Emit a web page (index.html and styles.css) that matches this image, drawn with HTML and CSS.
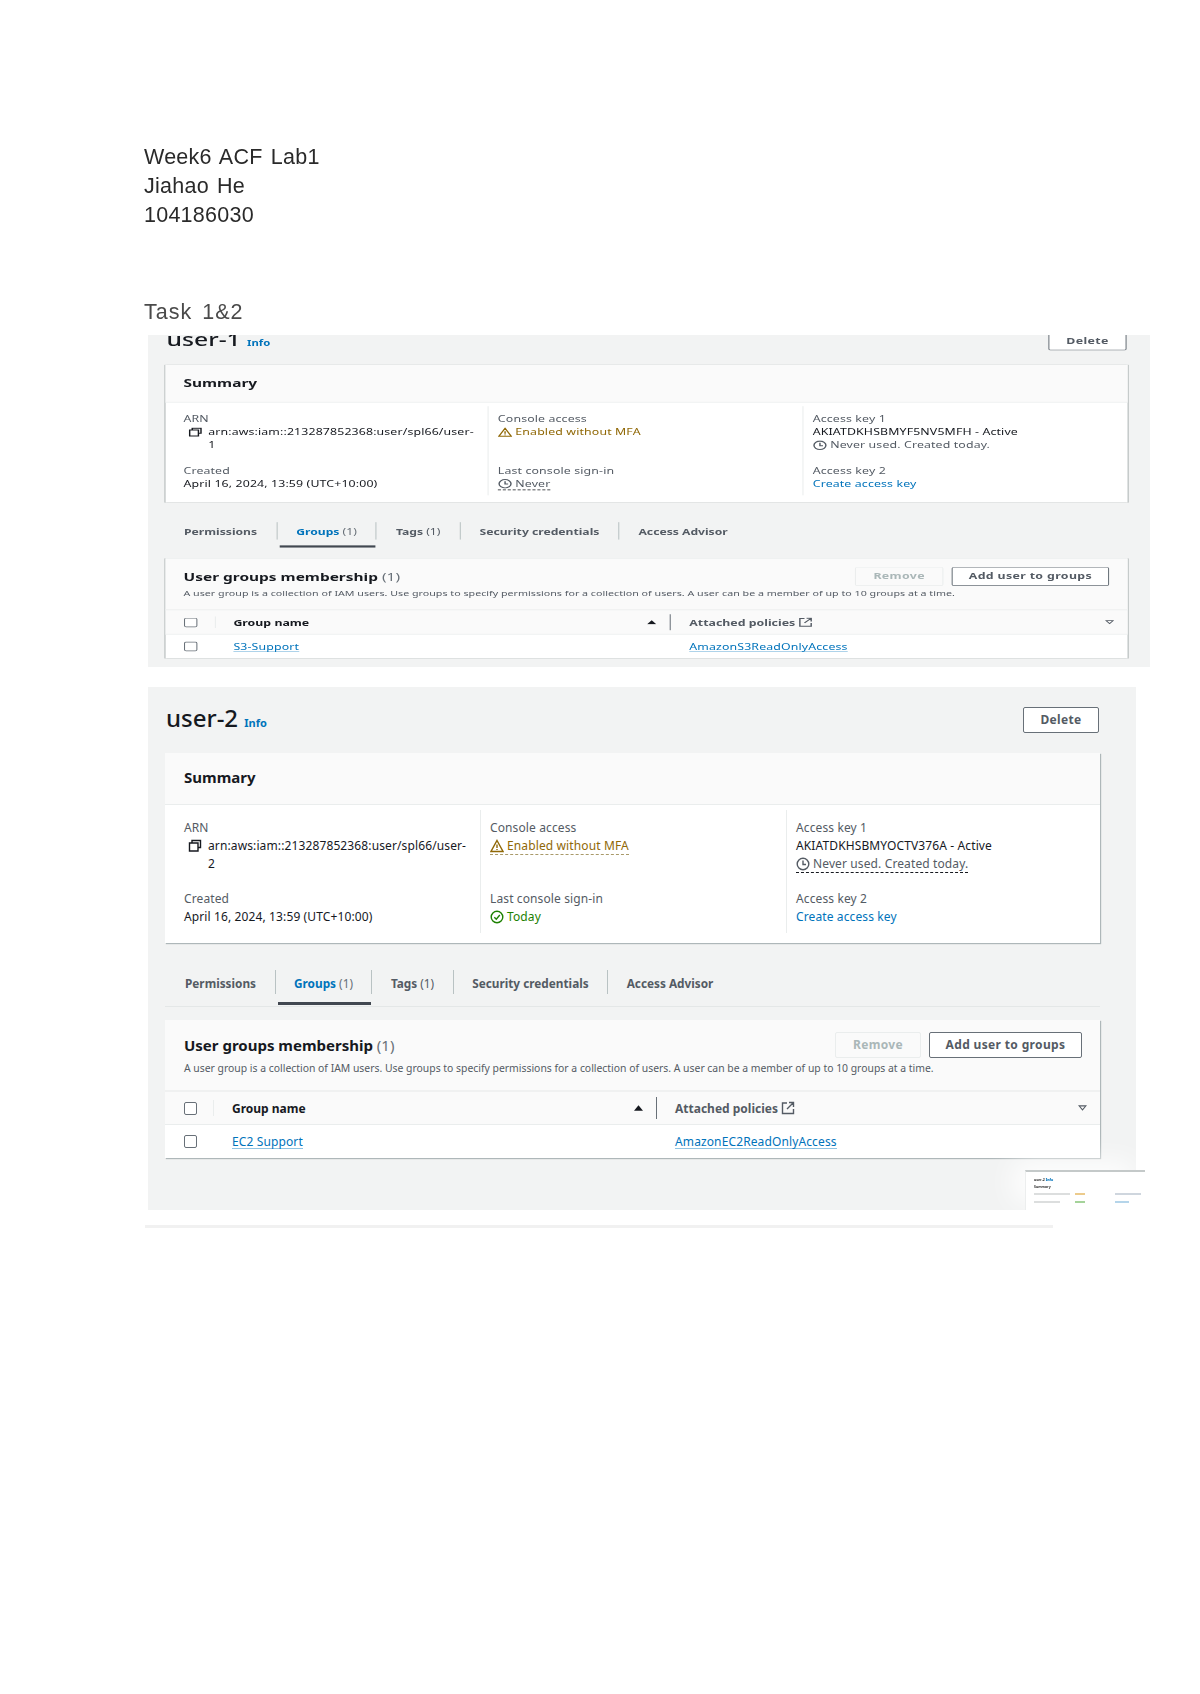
FILE: index.html
```html
<!DOCTYPE html>
<html lang="en">
<head>
<meta charset="utf-8">
<title>Week6 ACF Lab1</title>
<link rel="stylesheet" href="styles.css">
</head>
<body>
<main class="doc">
  <section class="intro">
    <p>Week6 ACF Lab1</p>
    <p>Jiahao He</p>
    <p>104186030</p>
  </section>
  <h2 class="task">Task 1&amp;2</h2>

  <div class="shot shot-clipped">
    <article class="sheet sheet-squashed">
      <header class="sheet-head">
        <h1 class="user-title">user-1 <a class="info">Info</a></h1>
        <button class="btn">Delete</button>
      </header>
      <section class="card">
        <h3 class="card-head">Summary</h3>
        <div class="summary">
          <div class="col">
            <div class="field">
              <div class="label">ARN</div>
              <div class="arn">
                <svg class="ico" viewBox="0 0 14 14"><path d="M4 3.500V1.500h8.500v7H10M1.500 4h8.500v8H1.500z"/></svg>
                <span class="value">arn:aws:iam::213287852368:user/spl66/user-<br>1</span>
              </div>
            </div>
            <div class="field">
              <div class="label">Created</div>
              <div class="value">April 16, 2024, 13:59 (UTC+10:00)</div>
            </div>
          </div>
          <div class="col col-rule">
            <div class="field">
              <div class="label">Console access</div>
              <div class="status warn">
                <svg class="ico" viewBox="0 0 14 14"><path d="M7 1.500 13 12.500H1zM7 5.500v3.500M7 10v1"/></svg>
                <span>Enabled without MFA</span>
              </div>
            </div>
            <div class="field">
              <div class="label">Last console sign-in</div>
              <div class="status muted dashed">
                <svg class="ico" viewBox="0 0 14 14"><circle cx="7" cy="7" r="5.800"/><path d="M7 3.500V7.500H10"/></svg>
                <span>Never</span>
              </div>
            </div>
          </div>
          <div class="col col-rule">
            <div class="field">
              <div class="label">Access key 1</div>
              <div class="value">AKIATDKHSBMYF5NV5MFH - Active</div>
              <div class="status muted">
                <svg class="ico" viewBox="0 0 14 14"><circle cx="7" cy="7" r="5.800"/><path d="M7 3.500V7.500H10"/></svg>
                <span>Never used. Created today.</span>
              </div>
            </div>
            <div class="field">
              <div class="label">Access key 2</div>
              <a class="link">Create access key</a>
            </div>
          </div>
        </div>
      </section>
      <nav class="tabs tabs-plain">
        <span class="tab">Permissions</span>
        <span class="tab tab-active">Groups <i>(1)</i></span>
        <span class="tab">Tags <i>(1)</i></span>
        <span class="tab">Security credentials</span>
        <span class="tab">Access Advisor</span>
      </nav>
      <section class="card">
        <div class="groups-head">
          <div class="groups-top">
            <h3 class="groups-title">User groups membership <i>(1)</i></h3>
            <div class="actions">
              <button class="btn btn-off">Remove</button>
              <button class="btn btn-add">Add user to groups</button>
            </div>
          </div>
          <p class="groups-desc">A user group is a collection of IAM users. Use groups to specify permissions for a collection of users. A user can be a member of up to 10 groups at a time.</p>
        </div>
        <div class="row row-head">
          <div class="cell-check cell-check-rule"><span class="box"></span></div>
          <div class="cell-name">
            <span class="th">Group name</span>
            <svg class="sort" viewBox="0 0 10 6"><path d="M5 0l5 6H0z"/></svg>
            <span class="sep"></span>
          </div>
          <div class="cell-policy">
            <span class="th th-soft">Attached policies</span>
            <svg class="ico ext" viewBox="0 0 14 14"><path d="M6 2H1.500v10.500h11V8M8 1.500h4.500V6M12.500 1.500 6 8"/></svg>
            <svg class="sort sort-down" viewBox="0 0 10 6"><path d="M0 0h10L5 6zM2.500 1.300 5 4.200l2.500-2.900z" fill-rule="evenodd"/></svg>
          </div>
        </div>
        <div class="row">
          <div class="cell-check"><span class="box"></span></div>
          <div class="cell-name"><a class="link link-under">S3-Support</a></div>
          <div class="cell-policy"><a class="link link-under">AmazonS3ReadOnlyAccess</a></div>
        </div>
      </section>
    </article>
  </div>

  <div class="shot">
    <article class="sheet">
      <header class="sheet-head">
        <h1 class="user-title">user-2 <a class="info">Info</a></h1>
        <button class="btn">Delete</button>
      </header>
      <section class="card">
        <h3 class="card-head">Summary</h3>
        <div class="summary">
          <div class="col">
            <div class="field">
              <div class="label">ARN</div>
              <div class="arn">
                <svg class="ico" viewBox="0 0 14 14"><path d="M4 3.500V1.500h8.500v7H10M1.500 4h8.500v8H1.500z"/></svg>
                <span class="value">arn:aws:iam::213287852368:user/spl66/user-<br>2</span>
              </div>
            </div>
            <div class="field">
              <div class="label">Created</div>
              <div class="value">April 16, 2024, 13:59 (UTC+10:00)</div>
            </div>
          </div>
          <div class="col col-rule">
            <div class="field">
              <div class="label">Console access</div>
              <div class="status warn dotted">
                <svg class="ico" viewBox="0 0 14 14"><path d="M7 1.500 13 12.500H1zM7 5.500v3.500M7 10v1"/></svg>
                <span>Enabled without MFA</span>
              </div>
            </div>
            <div class="field">
              <div class="label">Last console sign-in</div>
              <div class="status ok">
                <svg class="ico" viewBox="0 0 14 14"><circle cx="7" cy="7" r="5.800"/><path d="M4.300 7.200 6.300 9.200 9.800 5"/></svg>
                <span>Today</span>
              </div>
            </div>
          </div>
          <div class="col col-rule">
            <div class="field">
              <div class="label">Access key 1</div>
              <div class="value">AKIATDKHSBMYOCTV376A - Active</div>
              <div class="status muted dashed">
                <svg class="ico" viewBox="0 0 14 14"><circle cx="7" cy="7" r="5.800"/><path d="M7 3.500V7.500H10"/></svg>
                <span>Never used. Created today.</span>
              </div>
            </div>
            <div class="field">
              <div class="label">Access key 2</div>
              <a class="link">Create access key</a>
            </div>
          </div>
        </div>
      </section>
      <nav class="tabs">
        <span class="tab">Permissions</span>
        <span class="tab tab-active">Groups <i>(1)</i></span>
        <span class="tab">Tags <i>(1)</i></span>
        <span class="tab">Security credentials</span>
        <span class="tab">Access Advisor</span>
      </nav>
      <section class="card">
        <div class="groups-head">
          <div class="groups-top">
            <h3 class="groups-title">User groups membership <i>(1)</i></h3>
            <div class="actions">
              <button class="btn btn-off">Remove</button>
              <button class="btn btn-add">Add user to groups</button>
            </div>
          </div>
          <p class="groups-desc">A user group is a collection of IAM users. Use groups to specify permissions for a collection of users. A user can be a member of up to 10 groups at a time.</p>
        </div>
        <div class="row row-head">
          <div class="cell-check cell-check-rule"><span class="box"></span></div>
          <div class="cell-name">
            <span class="th">Group name</span>
            <svg class="sort" viewBox="0 0 10 6"><path d="M5 0l5 6H0z"/></svg>
            <span class="sep"></span>
          </div>
          <div class="cell-policy">
            <span class="th th-soft">Attached policies</span>
            <svg class="ico ext" viewBox="0 0 14 14"><path d="M6 2H1.500v10.500h11V8M8 1.500h4.500V6M12.500 1.500 6 8"/></svg>
            <svg class="sort sort-down" viewBox="0 0 10 6"><path d="M0 0h10L5 6zM2.500 1.300 5 4.200l2.500-2.900z" fill-rule="evenodd"/></svg>
          </div>
        </div>
        <div class="row">
          <div class="cell-check"><span class="box"></span></div>
          <div class="cell-name"><a class="link link-under">EC2 Support</a></div>
          <div class="cell-policy"><a class="link link-under">AmazonEC2ReadOnlyAccess</a></div>
        </div>
      </section>
    </article>
    <aside class="thumb">
      <span class="thumb-title">user-2 <b>Info</b></span>
      <span class="thumb-head">Summary</span>
      <div class="thumb-grid">
        <span class="t-bar t-long"></span><span class="t-bar t-warn"></span><span class="t-bar t-blue"></span>
        <span class="t-bar t-mid"></span><span class="t-bar t-ok"></span><span class="t-bar t-link"></span>
      </div>
    </aside>
  </div>

  <hr class="rule">
</main>
</body>
</html>
```
FILE: styles.css
```css
* { box-sizing: border-box; }
html, body { margin: 0; padding: 0; background: #fff; }
body { min-height: 1694px; font-family: "Noto Sans", "Open Sans", sans-serif; color: #16191f; }

.doc { padding: 143px 0 0 144px; }

.intro p { margin: 0; font: 21.500px/29px "Liberation Sans", Arial, sans-serif; letter-spacing: .25px; word-spacing: 2px; color: #2a2a2a; filter: blur(.4px); }
.task { margin: 68px 0 8px; font: 400 21.500px/29px "Liberation Sans", Arial, sans-serif; letter-spacing: 1px; word-spacing: 3px; color: #4a4a4a; filter: blur(.4px); }

/* embedded screenshots */
.shot { position: relative; margin: 0 0 0 4px; width: 997px; filter: blur(.4px); }
.shot-clipped { width: 1002px; height: 332px; margin-bottom: 20px; overflow: hidden; background: #f2f3f3; filter: blur(.6px); }

.sheet { --inset: 19px; width: 988px; padding: 0 0 52px 17px; background: #f2f3f3; }
.sheet-squashed { --inset: 17.500px; width: 974px; margin-top: -18px; transform: scale(1.029, .725); transform-origin: 0 0; }

.sheet-head { display: flex; align-items: center; justify-content: space-between; width: 935px; height: 66px; padding: 0 1px; }
.user-title { margin: 0; font-size: 24px; line-height: 30px; font-weight: 500; color: #16191f; }
.info { font-size: 11px; font-weight: 700; color: #0073bb; }

.btn { height: 26px; padding: 0; background: #fff; border: 1.500px solid #687078; border-radius: 2px; font: 700 12px/1 "Noto Sans", sans-serif; letter-spacing: .35px; color: #545b64; }
.sheet-head .btn { width: 76px; }
.btn-off { width: 86px; background: #fafafa; border: 1px solid #eaeded; color: #aab7b8; }
.btn-add { width: 153px; }

.card { width: 935px; background: #fff; box-shadow: 1px 1px 1px rgba(0, 28, 36, .28); }
.sheet-squashed .card { box-shadow: 1px 0 0 #aeb4b4, -1px 0 0 #aeb4b4; }
.card-head { height: 52px; margin: 0; padding-left: var(--inset); background: #fafafa; border-bottom: 1px solid #eaeded; font-size: 15px; line-height: 48px; font-weight: 700; }

.summary { display: grid; grid-template-columns: 315px 306px 314px; height: 138px; padding: 5px 0 10px; }
.sheet-squashed .summary { grid-template-columns: 313px 306px 316px; }
.col { display: grid; grid-template-rows: 54px 36px; row-gap: 17px; padding: 9px 0 0 var(--inset); }
.col-rule { padding-left: 9px; border-left: 1px solid #eaeded; }

.label, .value, .status, .link, .arn { font-size: 12px; line-height: 18px; letter-spacing: .12px; }
.label { color: #545b64; }
.value { color: #16191f; }
.arn { display: flex; align-items: flex-start; padding-left: 4px; }
.arn .ico { margin: 2px 6px 0 0; color: #16191f; }
.ico { flex: none; width: 14px; height: 14px; fill: none; stroke: currentColor; stroke-width: 1.400; }

.status { display: flex; width: fit-content; align-items: center; gap: 3px; line-height: 17px; }
.warn { color: #906806; }
.ok { color: #1d8102; }
.muted { color: #545b64; }
.dotted { border-bottom: 1px dashed #a99a6a; }
.dashed { border-bottom: 1px dashed #16191f; }

.link { display: block; color: #0073bb; }
.link-under { display: inline-block; border-bottom: 1px solid #8fc3e2; line-height: 13px; }

.tabs { display: flex; width: 935px; height: 64px; margin-bottom: 13px; padding-top: 27px; border-bottom: 1px solid #e4e7e7; }
.tabs-plain { border-bottom-color: transparent; }
.tab { position: relative; height: 24px; padding: 0 18.500px; border-left: 1px solid #b9c2c3; font-size: 11.800px; line-height: 26px; font-weight: 700; color: #545b64; }
.tab:first-child { padding-left: 20px; border-left: 0; }
.sheet-squashed .tab:first-child { padding-left: 18px; }
.tab i { font-style: normal; font-weight: 400; }
.tab-active { color: #0073bb; }
.tab-active i { color: #687078; }
.tab-active::after { content: ""; position: absolute; left: 2px; right: 0; bottom: -11px; height: 3px; background: #414750; }

.groups-head { height: 72px; padding: 12px 18px 0 var(--inset); background: #fafafa; border-bottom: 2px solid #f0f1f1; }
.groups-top { display: flex; align-items: center; justify-content: space-between; height: 26px; }
.groups-title { margin: 0; font-size: 15px; line-height: 24px; font-weight: 700; }
.groups-title i { font-style: normal; font-weight: 400; color: #687078; }
.actions { display: flex; gap: 8px; }
.groups-desc { margin: 2px 0 0; font-size: 10.400px; line-height: 16px; color: #545b64; }

.row { display: grid; grid-template-columns: 67px 443px 1fr; align-items: center; height: 33px; font-size: 12px; }
.sheet-squashed .row { grid-template-columns: 66px 443px 1fr; }
.row-head { background: #fafafa; border-bottom: 1px solid #eaeded; }
.cell-check { position: relative; display: flex; align-items: center; height: 100%; padding-left: var(--inset); }
.cell-check-rule::after { content: ""; position: absolute; left: 48px; top: 8px; bottom: 8px; width: 1px; background: #eaeded; }
.box { width: 13px; height: 13px; background: #fff; border: 1px solid #687078; border-radius: 2px; }
.cell-name, .cell-policy { display: flex; align-items: center; }
.th { margin-right: auto; font-weight: 700; color: #16191f; }
.th-soft { margin-right: 3px; color: #545b64; }
.ext { color: #545b64; }
.sort { width: 9px; height: 6px; fill: #16191f; }
.sort-down { margin: 0 13px 0 auto; fill: #545b64; }
.sep { width: 1px; height: 22px; margin: 0 18px 0 13px; background: #687078; }

/* picture-in-picture thumbnail */
.thumb { position: absolute; left: 877px; top: 483px; width: 120px; height: 40px; padding: 4px 0 0 8px; background: #fff; border-top: 2px solid #c4c9c9; border-left: 1px solid #eceeee; box-shadow: -12px -8px 28px rgba(255, 255, 255, .95); filter: blur(.5px); overflow: hidden; }
.thumb-title, .thumb-head { display: block; font-size: 3.500px; line-height: 7px; font-weight: 700; color: #333; }
.thumb-title b { color: #0073bb; }
.thumb-grid { display: grid; grid-template-columns: 41px 40px 30px; row-gap: 6px; margin-top: 3px; }
.t-bar { display: block; height: 2px; background: #dcdede; }
.t-long { width: 36px; }
.t-mid { width: 26px; }
.t-warn { width: 10px; background: #eccb8c; }
.t-ok { width: 10px; background: #a5d39a; }
.t-blue { width: 26px; background: #cfd6de; }
.t-link { width: 14px; background: #b5d5ea; }

.rule { width: 908px; height: 3px; margin: 15px 0 0 1px; background: #f1f1f1; border: 0; }
```
